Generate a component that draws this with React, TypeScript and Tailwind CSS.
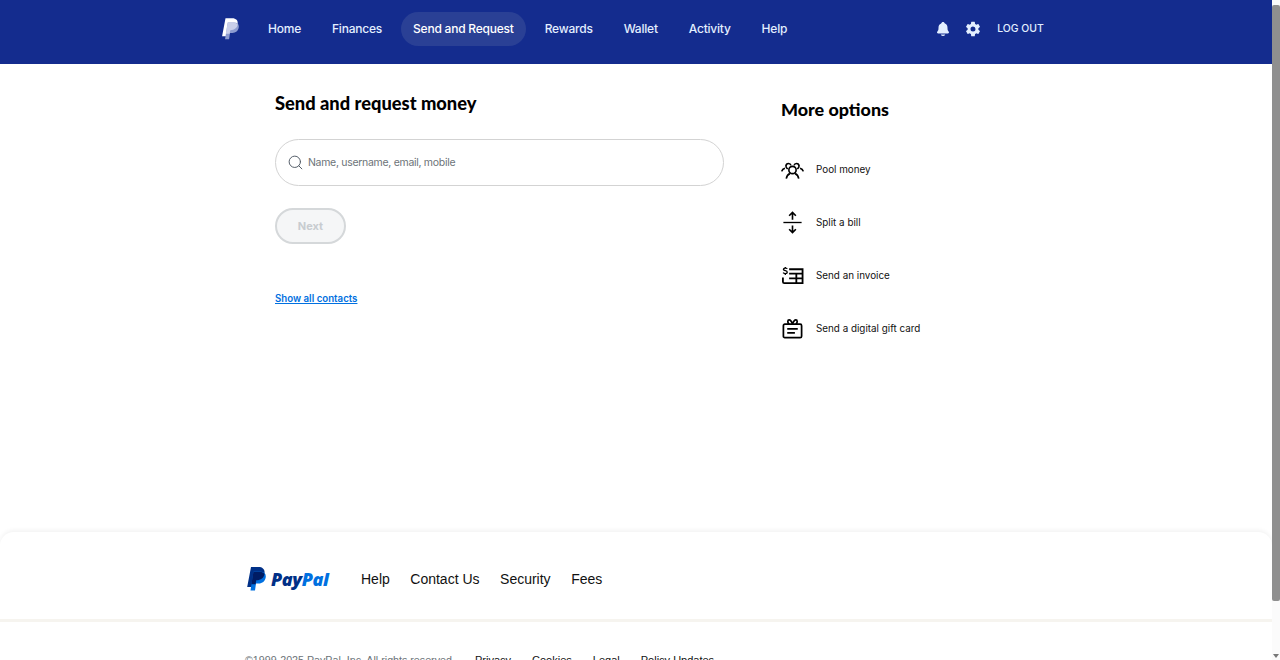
import { IoNotifications, IoSettingsSharp } from "react-icons/io5";
import { Search } from "lucide-react";

const navItems = ["Home", "Finances", "Send and Request", "Rewards", "Wallet", "Activity", "Help"];
const footerLinks = ["Help", "Contact Us", "Security", "Fees"];
const legalLinks = ["Privacy", "Cookies", "Legal", "Policy Updates"];

function Monogram({ back, front, mid, className }: { back: string; front: string; mid: string; className: string }) {
  return (
    <svg viewBox="0 0 20 24" className={className}>
      <path d="M5 0h7.500c4.200 0 6.600 2.500 6 6.300-.7 4.500-4 7-8.300 7H7.400L6.300 20H1.200z" fill={back} />
      <path d="M7.500 4.800h7.200c3.600 0 5.600 2.200 5 5.600-.6 3.800-3.400 6-7 6H10l-1 7H4.500l1-6.500z" fill={front} />
      <path d="M7.200 6.200l-1.800 11 .9.100h3.300l.7-4h.2c4.300 0 7.600-2.500 8-6.300-.9-1.400-2.500-2-4.300-2H7.400z" fill={mid} />
    </svg>
  );
}

function PoolIcon() {
  return (
    <svg viewBox="0 0 24 24" className="w-[23px] h-[23px]" fill="none" stroke="#000" strokeWidth="1.700">
      <circle cx="12" cy="12.500" r="3.800" />
      <path d="M5.500 21.500c.5-2.800 2.500-4.700 3.800-5.200M18.500 21.500c-.5-2.800-2.500-4.700-3.800-5.200" />
      <path d="M7 11.500c-1-1-2-1.200-1.800-3.200.1-1.500 1.200-2.600 2.600-2.600 1.300 0 2.300.8 2.600 2" />
      <path d="M17 11.500c1-1 2-1.200 1.800-3.200-.1-1.500-1.200-2.600-2.600-2.600-1.300 0-2.300.8-2.600 2" />
      <path d="M.8 14c.4-1.700 1.500-2.800 3.300-3.300M23.200 14c-.4-1.700-1.500-2.800-3.300-3.300" />
    </svg>
  );
}

function SplitIcon() {
  return (
    <svg viewBox="0 0 24 24" className="w-[23px] h-[23px]" fill="none" stroke="#000" strokeWidth="1.700">
      <path d="M12 9V1.500M8.500 5L12 1.500 15.500 5" />
      <path d="M2.500 12h19" strokeWidth="1.400" />
      <path d="M12 15v7.500M8.500 19l3.500 3.500 3.500-3.500" />
    </svg>
  );
}

function InvoiceIcon() {
  return (
    <svg viewBox="0 0 24 24" className="w-[23px] h-[23px]" fill="none" stroke="#000" strokeWidth="1.900">
      <path d="M8.500 5.500h14v14.500H3.500a1.500 1.500 0 0 1-1.500-1.500V14" />
      <path d="M8.500 10h14M8.500 15h14M16 10v10" />
      <path d="M6.500 5c-.5-1-3.800-1.200-4 .5-.2 2 4 1 4 3s-3.500 1.700-4.300.6M4.500 3v1.500M4.500 10v1.500" strokeWidth="1.400" />
    </svg>
  );
}

function GiftIcon() {
  return (
    <svg viewBox="0 0 24 24" className="w-[23px] h-[23px]" fill="none" stroke="#000" strokeWidth="1.800">
      <rect x="2.500" y="7.500" width="19" height="14" rx="1.500" />
      <path d="M6.500 12.500h11M6.500 16.500h8" />
      <path d="M12 7.500C11 4.500 10 3 8.500 3 6.800 3 6.500 6 8.500 7.500M12 7.500C13 4.500 14 3 15.500 3c1.700 0 2 3 0 4.500" />
    </svg>
  );
}

const options = [
  { label: "Pool money", icon: <PoolIcon /> },
  { label: "Split a bill", icon: <SplitIcon /> },
  { label: "Send an invoice", icon: <InvoiceIcon /> },
  { label: "Send a digital gift card", icon: <GiftIcon /> },
];

export default function App() {
  return (
    <div className="h-[660px] overflow-hidden flex bg-white font-['Inter',sans-serif]">
      <div className="flex-1 min-w-0 flex flex-col">
        <header className="h-[64px] shrink-0 bg-[#142c8e] flex items-center text-[#e3efff]">
          <div className="ml-[221px] w-[35px] -mt-[7px]">
            <Monogram back="#ffffff" front="#8d9cd0" mid="#c9cfea" className="w-[18px] h-[22px]" />
          </div>
          <nav className="flex items-center gap-[7px] -mt-[7px]">
            {navItems.map((item) => (
              <a
                key={item}
                className={`h-[34px] px-3 flex items-center rounded-full text-[12px] tracking-[-0.22px] font-medium whitespace-nowrap ${
                  item === "Send and Request" ? "bg-[#2a4095] text-white" : ""
                }`}
              >
                {item}
              </a>
            ))}
          </nav>
          <div className="ml-[136px] flex items-center -mt-[7px]">
            <IoNotifications className="w-[16px] h-[16px]" />
            <IoSettingsSharp className="w-[16px] h-[16px] ml-[14px]" />
            <span className="ml-[16px] text-[10.400px] font-medium">LOG OUT</span>
          </div>
        </header>

        <main className="flex-1 flex pl-[275px]">
          <section className="w-[449px] pt-[27px]">
            <h1 className="text-[18.300px] leading-[24px] font-black text-black font-['Lato',sans-serif]">Send and request money</h1>
            <div className="mt-[24px] h-[47px] border border-[#d3d3d3] rounded-full flex items-center pl-[11px] gap-[4px]">
              <Search className="w-[17px] h-[17px] text-[#545d68]" strokeWidth={1.400} />
              <span className="text-[10.500px] tracking-[-0.3px] text-[#6c7378]">Name, username, email, mobile</span>
            </div>
            <button className="mt-[22px] w-[71px] h-[36px] rounded-full border-2 border-[#d5d8da] bg-[#f5f6f7] text-[11px] font-bold text-[#c8ccd0]">
              Next
            </button>
            <div className="mt-[40px]">
              <a className="text-[9.700px] font-semibold text-[#0070e0] underline">Show all contacts</a>
            </div>
          </section>
          <aside className="ml-[57px] pt-[32px]">
            <h2 className="text-[17.900px] leading-[26px] font-black text-black font-['Lato',sans-serif]">More options</h2>
            <div className="mt-[21px] flex flex-col">
              {options.map((option) => (
                <div key={option.label} className="h-[53px] flex items-center">
                  <span className="w-[35px] shrink-0">{option.icon}</span>
                  <span className="text-[9.850px] text-[#111]">{option.label}</span>
                </div>
              ))}
            </div>
          </aside>
        </main>

        <footer className="h-[128px] shrink-0 font-['Liberation_Sans',sans-serif]">
          <div className="h-[87px] pt-[7px] rounded-t-[14px] shadow-[0_-2px_4px_rgba(0,0,0,0.05)] flex items-center pl-[246px]">
            <div className="flex items-center w-[115px]">
              <Monogram back="#003087" front="#0070e0" mid="#001c64" className="w-[20px] h-[24px]" />
              <span className="ml-[5px] text-[18px] font-extrabold italic font-['Open_Sans',sans-serif] tracking-[-0.4px]">
                <span className="text-[#003087]">Pay</span>
                <span className="text-[#0070e0]">Pal</span>
              </span>
            </div>
            <div className="flex gap-[20.500px] text-[14px] text-[#111]">
              {footerLinks.map((link) => (
                <a key={link}>{link}</a>
              ))}
            </div>
          </div>
          <div className="border-t-[3px] border-[#f6f4ef] pl-[245px] pt-[31px] flex items-center text-[11px] leading-[14px] whitespace-nowrap">
            <span className="text-[#6c7378] w-[230px] text-[10.700px]">©1999-2025 PayPal, Inc. All rights reserved.</span>
            <div className="flex gap-[21px] text-[#111]">
              {legalLinks.map((link) => (
                <a key={link}>{link}</a>
              ))}
            </div>
          </div>
        </footer>
      </div>

      <div className="w-[8px] shrink-0 flex flex-col items-center bg-[#fbfbfb]">
        <div className="mt-[5px] h-[596px] w-full rounded-[2px] bg-[#8f8f8f]" />
        <div className="mt-auto mb-[2px] w-0 h-0 border-x-[3px] border-x-transparent border-t-[4px] border-t-[#777]" />
      </div>
    </div>
  );
}
